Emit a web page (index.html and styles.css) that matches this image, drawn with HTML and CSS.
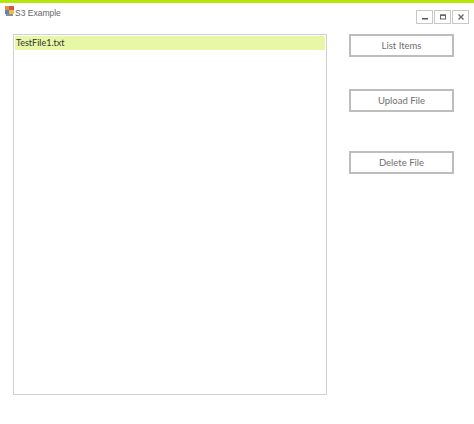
FILE: index.html
```html
<!DOCTYPE html>
<html lang="en">
<head>
    <meta charset="UTF-8">
    <meta name="viewport" content="width=device-width, initial-scale=1.0">
    <title>S3 Example</title>
    <link rel="stylesheet" href="styles.css">
</head>
<body>

<div class="window">
    <div class="title-bar">
        <div class="title">
            <svg class="app-icon" width="9" height="11" viewBox="0 0 9 11">
                <rect x="0" y="0" width="4" height="4" fill="#e0912f"/>
                <rect x="4" y="0" width="5" height="4" fill="#d9534a"/>
                <rect x="0" y="4" width="4" height="4" fill="#5a7fc4"/>
                <rect x="4" y="4" width="5" height="4" fill="#e3c04a"/>
                <rect x="1" y="8" width="7" height="2" fill="#8a8f99"/>
            </svg>
            <span class="title-text">S3 Example</span>
        </div>
        <div class="window-controls">
            <div class="control">
                <svg width="8" height="8" viewBox="0 0 8 8"><rect x="1" y="5" width="6" height="1.5" fill="#555"/></svg>
            </div>
            <div class="control">
                <svg width="8" height="8" viewBox="0 0 8 8"><rect x="1.5" y="2" width="5" height="4" fill="none" stroke="#666"/><rect x="1" y="1.5" width="6" height="1.5" fill="#666"/></svg>
            </div>
            <div class="control">
                <svg width="8" height="8" viewBox="0 0 8 8"><path d="M1.5 1.5L6.5 6.5M6.5 1.5L1.5 6.5" stroke="#666" stroke-width="1.3"/></svg>
            </div>
        </div>
    </div>

    <div class="content">
        <div class="file-list">
            <div class="file-item">TestFile1.txt</div>
        </div>
        <div class="actions">
            <button class="action-button">List Items</button>
            <button class="action-button upload-button">Upload File</button>
            <button class="action-button delete-button">Delete File</button>
        </div>
    </div>
</div>

</body>
</html>
```

FILE: styles.css
```css
body {
    margin: 0;
    background-color: white;
    font-family: "Lato", "Noto Sans", sans-serif;
}

.window {
    width: 474px;
    height: 424px;
    box-sizing: border-box;
    border-top: 3px solid #b4e60a;
    overflow: hidden;
}

.title-bar {
    display: flex;
    justify-content: space-between;
    align-items: flex-start;
    box-sizing: border-box;
    height: 31px;
    padding: 3px 5px 0 5px;
}

.title {
    display: flex;
    align-items: flex-start;
    gap: 1px;
}

.app-icon {
    display: block;
}

.title-text {
    font-family: "Liberation Sans", sans-serif;
    font-size: 8.5px;
    line-height: 12px;
    margin-top: 1px;
    color: #666666;
}

.window-controls {
    display: flex;
    gap: 1px;
    margin-top: 4px;
}

.control {
    width: 15px;
    height: 12px;
    border: 1px solid #c8c8c8;
    display: flex;
    align-items: center;
    justify-content: center;
}

.content {
    display: flex;
    align-items: flex-start;
    padding-left: 13px;
}

.file-list {
    width: 310px;
    height: 357px;
    padding: 1px;
    border: 1px solid #d0d0d0;
}

.file-item {
    height: 14px;
    line-height: 14px;
    padding-left: 1px;
    background-color: #e8f7a6;
    font-size: 9px;
    color: #333333;
}

.actions {
    display: flex;
    flex-direction: column;
    width: 105px;
    margin-left: 22px;
}

.action-button {
    height: 23px;
    padding: 0;
    border: 2px solid #bdbdbd;
    background: white;
    font-family: inherit;
    font-size: 9.5px;
    color: #707070;
}

.upload-button {
    margin-top: 32px;
}

.delete-button {
    margin-top: 39px;
}
```
